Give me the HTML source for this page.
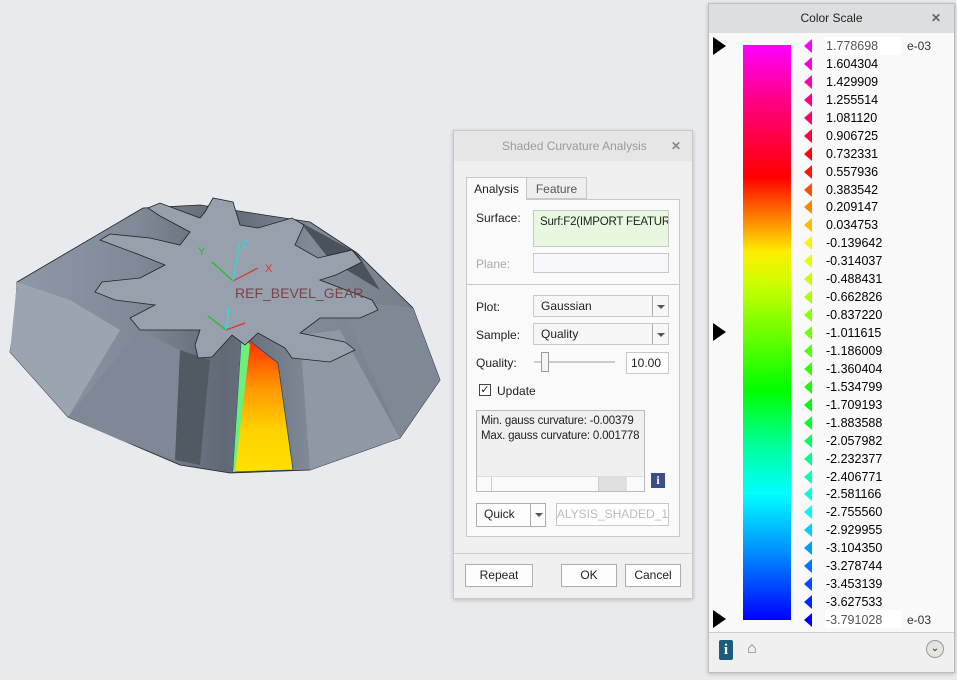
<!DOCTYPE html>
<html><head><meta charset="utf-8"><style>
*{box-sizing:border-box;margin:0;padding:0}
body{width:957px;height:680px;background:#e8eaed;font-family:"Liberation Sans",sans-serif;font-size:12px;color:#222;position:relative;overflow:hidden}
.a{position:absolute}
.fld{position:absolute;background:#fff;border:1px solid #c8c8c8}
.btn{position:absolute;background:#fdfdfd;border:1px solid #adadad;text-align:center;line-height:21px;font-size:12px}
.dd{position:absolute;border-left:1px solid #adadad;top:0;bottom:0;right:0;width:16px}
.dd:after{content:"";position:absolute;left:4px;top:9px;border-left:4px solid transparent;border-right:4px solid transparent;border-top:4px solid #555}
.lbl{position:absolute;font-size:12px}
.row{position:absolute;left:804px;height:17px;width:100px}
.row i{position:absolute;left:0;top:1px;width:0;height:0;border-top:7px solid transparent;border-bottom:7px solid transparent;border-right:8px solid}
.row span{position:absolute;left:22px;top:1px;font-size:12.5px;color:#000}
</style></head><body>

<svg class="a" style="left:0;top:180px" width="450" height="300" viewBox="0 180 450 300">
<defs>
<linearGradient id="bg" x1="0" y1="0" x2="1" y2="0">
<stop offset="0" stop-color="#8e98a6"/><stop offset=".3" stop-color="#7f8997"/><stop offset=".5" stop-color="#5f6874"/><stop offset=".7" stop-color="#808a98"/><stop offset="1" stop-color="#737d8a"/></linearGradient>
<linearGradient id="cw" x1="0" y1="0" x2="0" y2="1"><stop offset="0" stop-color="#ff2000"/><stop offset=".4" stop-color="#ff9800"/><stop offset=".7" stop-color="#ffd200"/><stop offset="1" stop-color="#ffe000"/></linearGradient>
</defs>
<polygon points="17,282 143,208 200,205 310,222 357,253 413,308 440,380 400,438 310,470 230,473 180,465 68,417 10,352 15,320" fill="url(#bg)" stroke="#222" stroke-width="0.8"/>
<polygon points="10,352 17,282 70,300 120,330 68,417" fill="#9ba5b2"/>
<polygon points="140,330 180,350 175,460 120,440 68,417" fill="#7e8896"/>
<polygon points="180,350 210,360 200,465 175,460" fill="#515963"/>
<polygon points="300,335 340,330 400,438 310,470" fill="#8f99a6"/>
<polygon points="340,300 413,308 440,380 400,438" fill="#7f8996"/>
<polygon points="300,222 357,253 380,290 330,260" fill="#4a525c"/>
<polygon points="242,333 255,345 278,363 293,470 233,472" fill="url(#cw)" stroke="#1a4a8a" stroke-width="0.8"/>
<polygon points="242,333 250,345 235,472 233,472" fill="#6cf07a"/>
<polygon points="205,212 213,198 233,202 240,225 258,228 292,218 304,225 295,245 318,258 352,250 362,262 336,275 320,280 372,300 378,310 360,318 320,318 300,333 345,342 355,350 330,362 292,358 285,348 258,333 245,345 232,335 212,357 198,358 195,345 200,330 170,330 140,330 130,318 155,305 115,300 95,292 102,282 140,278 165,265 140,255 100,240 110,234 150,238 180,245 190,232 160,216 148,208 160,203 200,218" fill="#97a1ae" stroke="#222" stroke-width="0.8"/>
<g stroke-width="1.2" fill="none"><path d="M233,281 L258,268" stroke="#e03030"/><path d="M233,281 L212,262" stroke="#20c020"/><path d="M233,281 L240,242" stroke="#20e0e0"/>
<path d="M226,330 L245,323" stroke="#e03030"/><path d="M226,330 L208,316" stroke="#20c020"/><path d="M226,330 L229,308" stroke="#20e0e0"/></g>
<text x="265" y="272" fill="#e03030" font-size="11" font-family="Liberation Sans">X</text>
<text x="198" y="255" fill="#20c020" font-size="11" font-family="Liberation Sans">Y</text>
<text x="242" y="248" fill="#20e0e0" font-size="11" font-family="Liberation Sans">Z</text>
<text x="235" y="298" fill="#7a4444" font-size="14" font-family="Liberation Sans">REF_BEVEL_GEAR</text>
</svg>

<!-- Shaded dialog -->
<div class="a" style="left:453px;top:130px;width:240px;height:469px;background:#f0f0f0;border:1px solid #c9c9c9;box-shadow:0 1px 4px rgba(0,0,0,.2)">
<div class="a" style="left:0;top:0;width:238px;height:30px;background:#e6e6e6;color:#9a9a9a;font-size:12px;line-height:30px;padding-left:48px">Shaded Curvature Analysis<span style="position:absolute;right:11px;color:#888;font-weight:bold">✕</span></div>
</div>
<div class="a" style="left:466px;top:199px;width:214px;height:338px;border:1px solid #c8c8c8;background:#fafafa"></div>
<div class="a" style="left:466px;top:177px;width:61px;height:23px;border:1px solid #c8c8c8;border-bottom:none;background:#fafafa;text-align:center;line-height:22px">Analysis</div>
<div class="a" style="left:527px;top:177px;width:60px;height:22px;border:1px solid #c8c8c8;border-left:none;background:#eeeeee;text-align:center;line-height:22px;color:#555">Feature</div>
<div class="lbl" style="left:476px;top:211px">Surface:</div>
<div class="fld" style="left:533px;top:210px;width:136px;height:37px;background:#e8f7df;padding:5px 6px;white-space:nowrap;overflow:hidden;font-size:11.5px;letter-spacing:-0.2px">Surf:F2(IMPORT FEATURE</div>
<div class="lbl" style="left:476px;top:257px;color:#aaa">Plane:</div>
<div class="fld" style="left:533px;top:253px;width:136px;height:20px;background:#f8f7fc"></div>
<div class="a" style="left:467px;top:284px;width:212px;height:1px;background:#c8c8c8"></div>
<div class="lbl" style="left:476px;top:300px">Plot:</div>
<div class="fld" style="left:533px;top:295px;width:136px;height:22px;background:#f7f7f7;padding:3px 7px">Gaussian<div class="dd"></div></div>
<div class="lbl" style="left:476px;top:328px">Sample:</div>
<div class="fld" style="left:533px;top:323px;width:136px;height:22px;background:#f7f7f7;padding:3px 7px">Quality<div class="dd"></div></div>
<div class="lbl" style="left:476px;top:356px">Quality:</div>
<div class="a" style="left:534px;top:361px;width:81px;height:2px;background:#ccc"></div>
<div class="a" style="left:541px;top:352px;width:8px;height:20px;background:#f4f4f4;border:1px solid #999"></div>
<div class="fld" style="left:626px;top:352px;width:43px;height:22px;padding:3px 4px">10.00</div>
<div class="a" style="left:479px;top:384px;width:12px;height:12px;border:1px solid #444;background:#fff;font-size:11px;line-height:10px;text-align:center">✓</div>
<div class="lbl" style="left:497px;top:384px">Update</div>
<div class="a" style="left:476px;top:410px;width:169px;height:82px;border:1px solid #bbb;background:#f0f0f0;padding:3px 4px;line-height:15px;white-space:nowrap;overflow:hidden;font-size:11.5px;letter-spacing:-0.2px">Min. gauss curvature: -0.00379<br>Max. gauss curvature: 0.001778
<div class="a" style="left:0;bottom:0;width:167px;height:15px;background:#fafafa;border-top:1px solid #ddd"><div class="a" style="left:14px;top:0;width:108px;height:14px;border-left:1px solid #ccc;border-right:1px solid #ccc;background:#fafafa"></div><div class="a" style="left:122px;top:0;width:28px;height:14px;background:#e0e0e0"></div></div></div>
<div class="a" style="left:651px;top:473px;width:14px;height:15px;background:#3a4e8c;color:#fff;font-weight:bold;font-size:12px;text-align:center;line-height:15px;font-family:'Liberation Serif',serif">i</div>
<div class="btn" style="left:476px;top:503px;width:70px;height:24px;text-align:left;padding-left:7px">Quick<div class="dd" style="width:15px"></div></div>
<div class="fld" style="left:556px;top:503px;width:113px;height:23px;color:#bbb;padding:3px 0;overflow:hidden;white-space:nowrap;direction:rtl">ANALYSIS_SHADED_1</div>
<div class="a" style="left:454px;top:553px;width:238px;height:1px;background:#d0d0d0"></div>
<div class="btn" style="left:465px;top:564px;width:68px;height:23px">Repeat</div>
<div class="btn" style="left:561px;top:564px;width:56px;height:23px">OK</div>
<div class="btn" style="left:625px;top:564px;width:56px;height:23px">Cancel</div>

<!-- Color scale -->
<div class="a" style="left:708px;top:3px;width:247px;height:670px;background:#f9f9f9;border:1px solid #bdbdbd;box-shadow:0 1px 4px rgba(0,0,0,.2)"></div>
<div class="a" style="left:709px;top:4px;width:245px;height:29px;background:#dcdedf;text-align:center;line-height:29px;font-size:12px">Color Scale<span style="position:absolute;right:13px;color:#666;font-weight:bold">✕</span></div>
<div class="a" style="left:709px;top:632px;width:245px;height:40px;background:#f0f0f0;border-top:1px solid #ccc"></div>
<div class="a" style="left:719px;top:640px;width:14px;height:20px;background:#1e5c7c;border-radius:2px;color:#fff;font-weight:bold;font-size:15px;text-align:center;line-height:20px;font-family:'Liberation Serif',serif">i</div>
<div class="a" style="left:747px;top:640px;font-size:16px;color:#777">⌂</div>
<div class="a" style="left:926px;top:640px;width:18px;height:18px;border-radius:50%;border:1px solid #999;background:#e6e4df;font-size:10px;text-align:center;line-height:16px">⌄</div>
<div class="a" style="left:743px;top:45px;width:48px;height:575px;background:linear-gradient(#ff00ff 0%,#ff0080 10%,#ff0000 23%,#ff8000 30%,#ffee00 36%,#c8ff00 42%,#00ff00 60%,#00ffa0 70%,#00ffff 78%,#0090ff 88%,#0000ff 100%)"></div>
<div class="a" style="left:713px;top:37px;width:0;height:0;border-top:9px solid transparent;border-bottom:9px solid transparent;border-left:13px solid #000"></div>
<div class="a" style="left:713px;top:323px;width:0;height:0;border-top:9px solid transparent;border-bottom:9px solid transparent;border-left:13px solid #000"></div>
<div class="a" style="left:713px;top:610px;width:0;height:0;border-top:9px solid transparent;border-bottom:9px solid transparent;border-left:13px solid #000"></div>
<div class="a" style="left:825px;top:37px;width:76px;height:18px;background:#fff"></div>
<div class="a" style="left:825px;top:610px;width:76px;height:18px;background:#fff"></div>
<div class="lbl" style="left:907px;top:39px;color:#333">e-03</div>
<div class="lbl" style="left:907px;top:613px;color:#333">e-03</div>

<div class="row" style="top:38px"><i style="border-right-color:hsl(300,100%,50%)"></i><span style="color:#555">1.778698</span></div>
<div class="row" style="top:56px"><i style="border-right-color:hsl(309,100%,50%)"></i><span>1.604304</span></div>
<div class="row" style="top:74px"><i style="border-right-color:hsl(318,100%,50%)"></i><span>1.429909</span></div>
<div class="row" style="top:92px"><i style="border-right-color:hsl(327,100%,50%)"></i><span>1.255514</span></div>
<div class="row" style="top:110px"><i style="border-right-color:hsl(336,100%,50%)"></i><span>1.081120</span></div>
<div class="row" style="top:128px"><i style="border-right-color:hsl(346,100%,50%)"></i><span>0.906725</span></div>
<div class="row" style="top:146px"><i style="border-right-color:hsl(355,100%,50%)"></i><span>0.732331</span></div>
<div class="row" style="top:164px"><i style="border-right-color:hsl(5,100%,50%)"></i><span>0.557936</span></div>
<div class="row" style="top:182px"><i style="border-right-color:hsl(18,100%,50%)"></i><span>0.383542</span></div>
<div class="row" style="top:199px"><i style="border-right-color:hsl(31,100%,50%)"></i><span>0.209147</span></div>
<div class="row" style="top:217px"><i style="border-right-color:hsl(44,100%,50%)"></i><span>0.034753</span></div>
<div class="row" style="top:235px"><i style="border-right-color:hsl(57,100%,50%)"></i><span>-0.139642</span></div>
<div class="row" style="top:253px"><i style="border-right-color:hsl(66,100%,50%)"></i><span>-0.314037</span></div>
<div class="row" style="top:271px"><i style="border-right-color:hsl(73,100%,50%)"></i><span>-0.488431</span></div>
<div class="row" style="top:289px"><i style="border-right-color:hsl(80,100%,50%)"></i><span>-0.662826</span></div>
<div class="row" style="top:307px"><i style="border-right-color:hsl(87,100%,50%)"></i><span>-0.837220</span></div>
<div class="row" style="top:325px"><i style="border-right-color:hsl(94,100%,50%)"></i><span>-1.011615</span></div>
<div class="row" style="top:343px"><i style="border-right-color:hsl(101,100%,50%)"></i><span>-1.186009</span></div>
<div class="row" style="top:361px"><i style="border-right-color:hsl(107,100%,50%)"></i><span>-1.360404</span></div>
<div class="row" style="top:379px"><i style="border-right-color:hsl(114,100%,50%)"></i><span>-1.534799</span></div>
<div class="row" style="top:397px"><i style="border-right-color:hsl(122,100%,50%)"></i><span>-1.709193</span></div>
<div class="row" style="top:415px"><i style="border-right-color:hsl(132,100%,50%)"></i><span>-1.883588</span></div>
<div class="row" style="top:433px"><i style="border-right-color:hsl(142,100%,50%)"></i><span>-2.057982</span></div>
<div class="row" style="top:451px"><i style="border-right-color:hsl(152,100%,50%)"></i><span>-2.232377</span></div>
<div class="row" style="top:469px"><i style="border-right-color:hsl(162,100%,50%)"></i><span>-2.406771</span></div>
<div class="row" style="top:486px"><i style="border-right-color:hsl(172,100%,50%)"></i><span>-2.581166</span></div>
<div class="row" style="top:504px"><i style="border-right-color:hsl(182,100%,50%)"></i><span>-2.755560</span></div>
<div class="row" style="top:522px"><i style="border-right-color:hsl(192,100%,50%)"></i><span>-2.929955</span></div>
<div class="row" style="top:540px"><i style="border-right-color:hsl(203,100%,50%)"></i><span>-3.104350</span></div>
<div class="row" style="top:558px"><i style="border-right-color:hsl(213,100%,50%)"></i><span>-3.278744</span></div>
<div class="row" style="top:576px"><i style="border-right-color:hsl(222,100%,50%)"></i><span>-3.453139</span></div>
<div class="row" style="top:594px"><i style="border-right-color:hsl(231,100%,50%)"></i><span>-3.627533</span></div>
<div class="row" style="top:612px"><i style="border-right-color:hsl(240,100%,50%)"></i><span style="color:#555">-3.791028</span></div>
</body></html>
